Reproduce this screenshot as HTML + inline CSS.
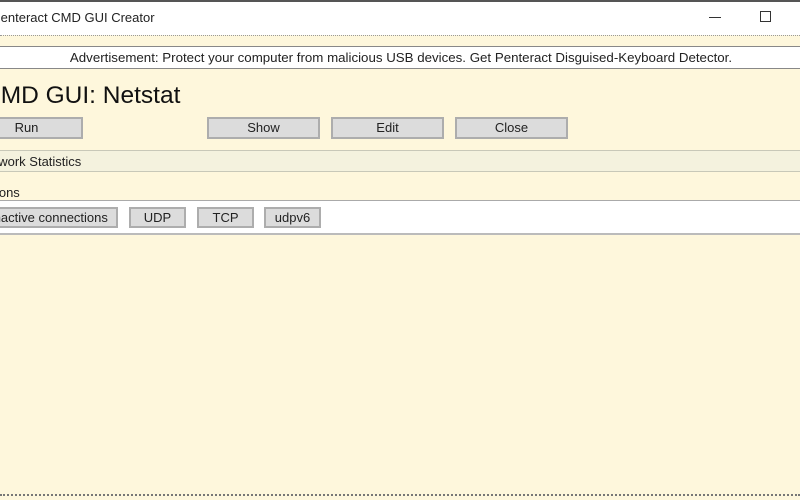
<!DOCTYPE html><html><head><style>
body{margin:0;width:800px;height:500px;overflow:hidden;background:#fef7dc;font-family:"Liberation Sans",sans-serif;position:relative;color:#222}
div{position:absolute;box-sizing:border-box}
.b{background:#dcdcdc;border:2px solid #adadad;font-size:13px;text-align:center;line-height:17px;color:#222}
</style></head><body>
<div style="left:0;top:0;width:800px;height:2px;background:#555"></div>
<div style="left:0;top:2px;width:800px;height:33px;background:#fff"></div>
<div style="left:-8px;top:10px;font-size:13px">Penteract CMD GUI Creator</div>
<div style="left:709px;top:17px;width:12px;height:1px;background:#333"></div>
<div style="left:760px;top:11px;width:11px;height:11px;border:1px solid #333"></div>
<div style="left:0;top:35px;width:800px;height:1px;border-top:1px dotted #999"></div>
<div style="left:0;top:46px;width:800px;height:23px;background:#fff;border-top:1px solid #888;border-bottom:1px solid #888"></div>
<div style="left:0;top:50px;width:800px;text-align:center;font-size:13.3px;padding-left:2px">Advertisement: Protect your computer from malicious USB devices. Get Penteract Disguised-Keyboard Detector.</div>
<div style="left:-17px;top:82px;font-size:24.5px;color:#111">CMD GUI: Netstat</div>
<div class="b" style="left:-30px;top:117px;width:113px;height:22px">Run</div>
<div class="b" style="left:207px;top:117px;width:113px;height:22px">Show</div>
<div class="b" style="left:331px;top:117px;width:113px;height:22px">Edit</div>
<div class="b" style="left:455px;top:117px;width:113px;height:22px">Close</div>
<div style="left:0;top:150px;width:800px;height:22px;background:#f4f2de;border-top:1px solid #c8c8b8;border-bottom:1px solid #c8c8b8"></div>
<div style="left:-22px;top:154px;font-size:13px">Network Statistics</div>
<div style="left:-25px;top:185px;font-size:13px">Options</div>
<div style="left:0;top:200px;width:800px;height:35px;background:#fff;border-top:1px solid #aaa;border-bottom:2px solid #bbb"></div>
<div class="b" style="left:-20px;top:207px;width:138px;height:21px">Inactive connections</div>
<div class="b" style="left:129px;top:207px;width:57px;height:21px">UDP</div>
<div class="b" style="left:197px;top:207px;width:57px;height:21px">TCP</div>
<div class="b" style="left:264px;top:207px;width:57px;height:21px">udpv6</div>
<div style="left:0;top:494px;width:800px;height:2px;border-top:2px dotted #777"></div>
<div style="left:0;top:496px;width:800px;height:4px;background:#fef7dc"></div>
</body></html>
